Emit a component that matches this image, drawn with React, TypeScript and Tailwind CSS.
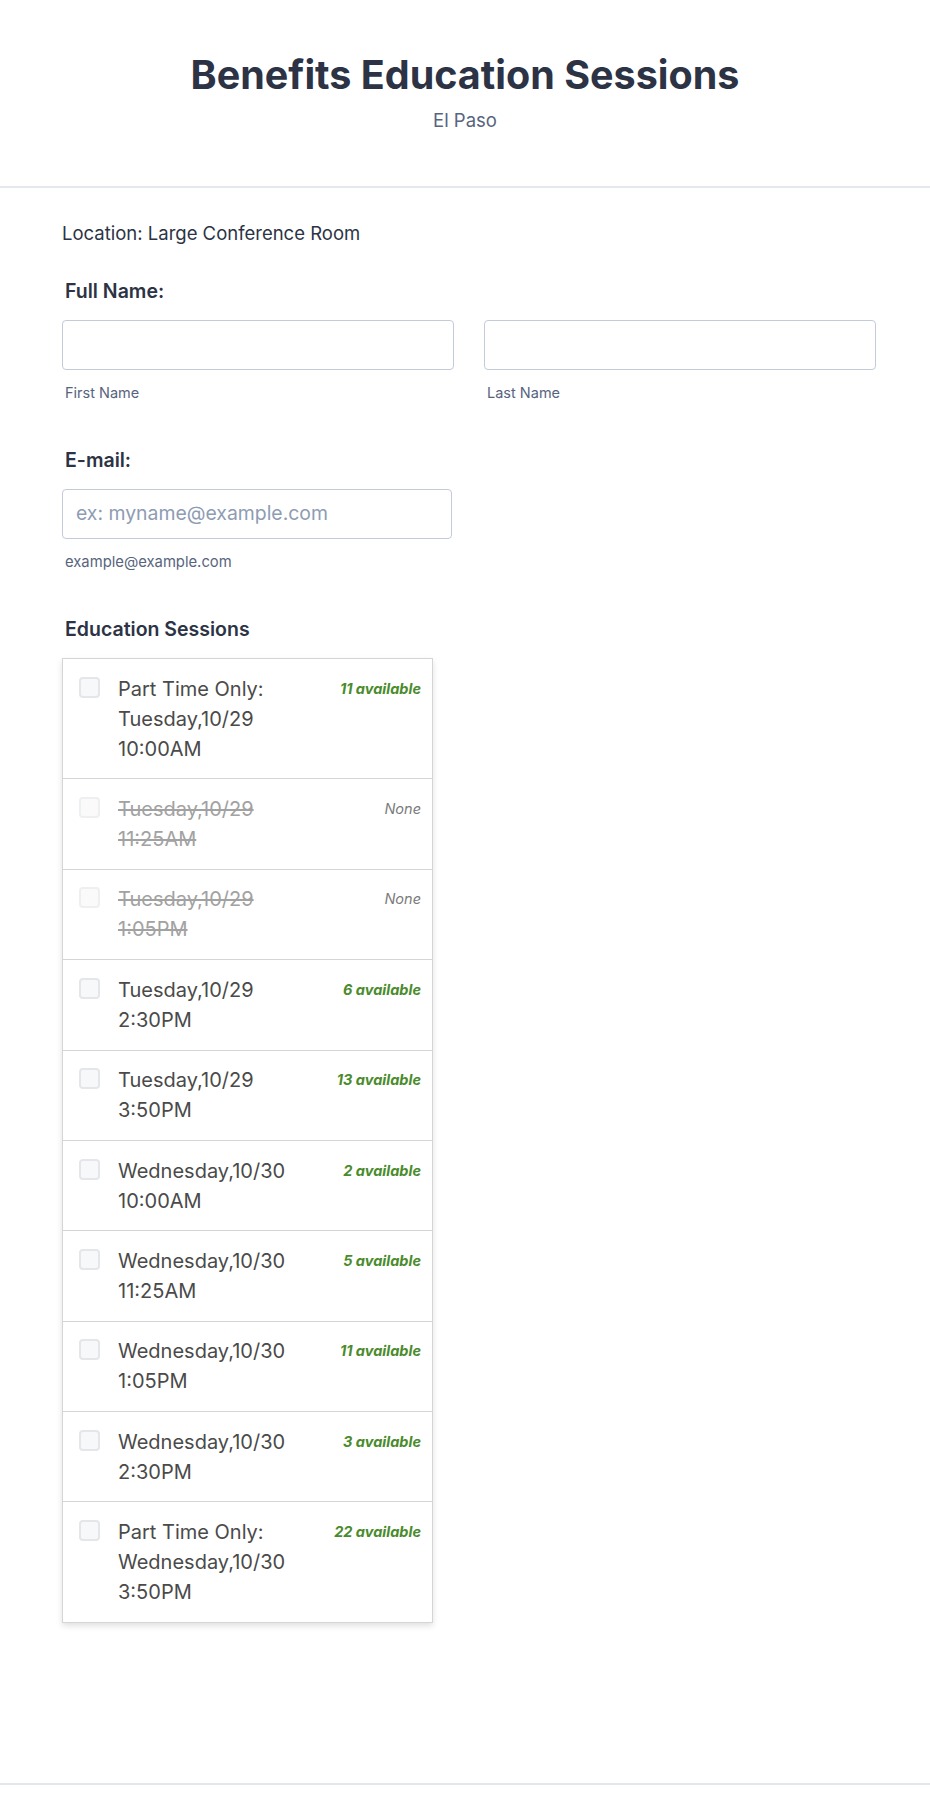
import React from "react";

type Session = {
  lines: string[];
  avail: number | null;
};

const sessions: Session[] = [
  { lines: ["Part Time Only:", "Tuesday,10/29", "10:00AM"], avail: 11 },
  { lines: ["Tuesday,10/29", "11:25AM"], avail: null },
  { lines: ["Tuesday,10/29", "1:05PM"], avail: null },
  { lines: ["Tuesday,10/29", "2:30PM"], avail: 6 },
  { lines: ["Tuesday,10/29", "3:50PM"], avail: 13 },
  { lines: ["Wednesday,10/30", "10:00AM"], avail: 2 },
  { lines: ["Wednesday,10/30", "11:25AM"], avail: 5 },
  { lines: ["Wednesday,10/30", "1:05PM"], avail: 11 },
  { lines: ["Wednesday,10/30", "2:30PM"], avail: 3 },
  { lines: ["Part Time Only:", "Wednesday,10/30", "3:50PM"], avail: 22 },
];

const SessionRow = ({ s }: { s: Session }) => {
  const full = s.avail === null;
  return (
    <div className="flex items-start pl-[16px] pr-[11px] py-[14.7px]">
      <div
        className={`mt-[3px] size-[21px] shrink-0 rounded-[4px] border-2 ${
          full ? "border-[#eeeff1] bg-[#fafafa]" : "border-[#e4e6e9] bg-[#f7f8f9]"
        }`}
      />
      <div
        className={`ml-[18px] flex-1 text-[20px] leading-[30px] ${
          full ? "text-[#a2a2a2] line-through" : "text-[#4a4a4a]"
        }`}
      >
        {s.lines.map((l) => (
          <div key={l}>{l}</div>
        ))}
      </div>
      {full ? (
        <div className="text-[14.5px] leading-[30px] italic text-[#7b7b7b]">None</div>
      ) : (
        <div className="text-[14.5px] leading-[30px] font-bold italic text-[#4a8b2c]">
          {s.avail} available
        </div>
      )}
    </div>
  );
};

export default function App() {
  return (
    <div className="min-h-[1812px] bg-white font-['Inter','Liberation_Sans',sans-serif] text-[#2c3345]">
      {/* header */}
      <header className="flex flex-col items-center pt-[52px] pb-[53px] border-b-2 border-[#e4e7ee]">
        <h1 className="text-[39.5px] leading-[46px] font-bold text-[#2c3345]">
          Benefits Education Sessions
        </h1>
        <div className="mt-[10px] text-[18.5px] leading-[25px] text-[#57647e]">El Paso</div>
      </header>

      <main className="pl-[62px] pt-[33px] pb-[160px] border-b-2 border-[#e4e7ee]">
        <p className="text-[18.5px] leading-[24px]">Location: Large Conference Room</p>

        <div className="mt-[33px] pl-[3px] text-[19.5px] leading-[26px] font-semibold">Full Name:</div>
        <div className="mt-[16px] flex gap-[30px]">
          <div className="w-[392px]">
            <div className="h-[50px] rounded-[4px] border border-[#c3cad8]" />
            <div className="mt-[14px] pl-[3px] text-[14.5px] leading-[18px] text-[#57647e]">First Name</div>
          </div>
          <div className="w-[392px]">
            <div className="h-[50px] rounded-[4px] border border-[#c3cad8]" />
            <div className="mt-[14px] pl-[3px] text-[14.5px] leading-[18px] text-[#57647e]">Last Name</div>
          </div>
        </div>

        <div className="mt-[45px] pl-[3px] text-[19.5px] leading-[26px] font-semibold">E-mail:</div>
        <div className="mt-[16px] w-[390px] h-[50px] rounded-[4px] border border-[#c3cad8] flex items-center px-[13px] text-[19.4px] text-[#8e9cb3]">
          ex: myname@example.com
        </div>
        <div className="mt-[14px] pl-[3px] text-[14.8px] leading-[18px] text-[#57647e]">example@example.com</div>

        <div className="mt-[45px] pl-[3px] text-[19.5px] leading-[26px] font-semibold">Education Sessions</div>
        <div className="mt-[16px] w-[371px] border border-[#d5d5d5] divide-y divide-[#d5d5d5] shadow-[0_3px_6px_rgba(0,0,0,0.12)]">
          {sessions.map((s, i) => (
            <SessionRow key={i} s={s} />
          ))}
        </div>
      </main>
    </div>
  );
}
